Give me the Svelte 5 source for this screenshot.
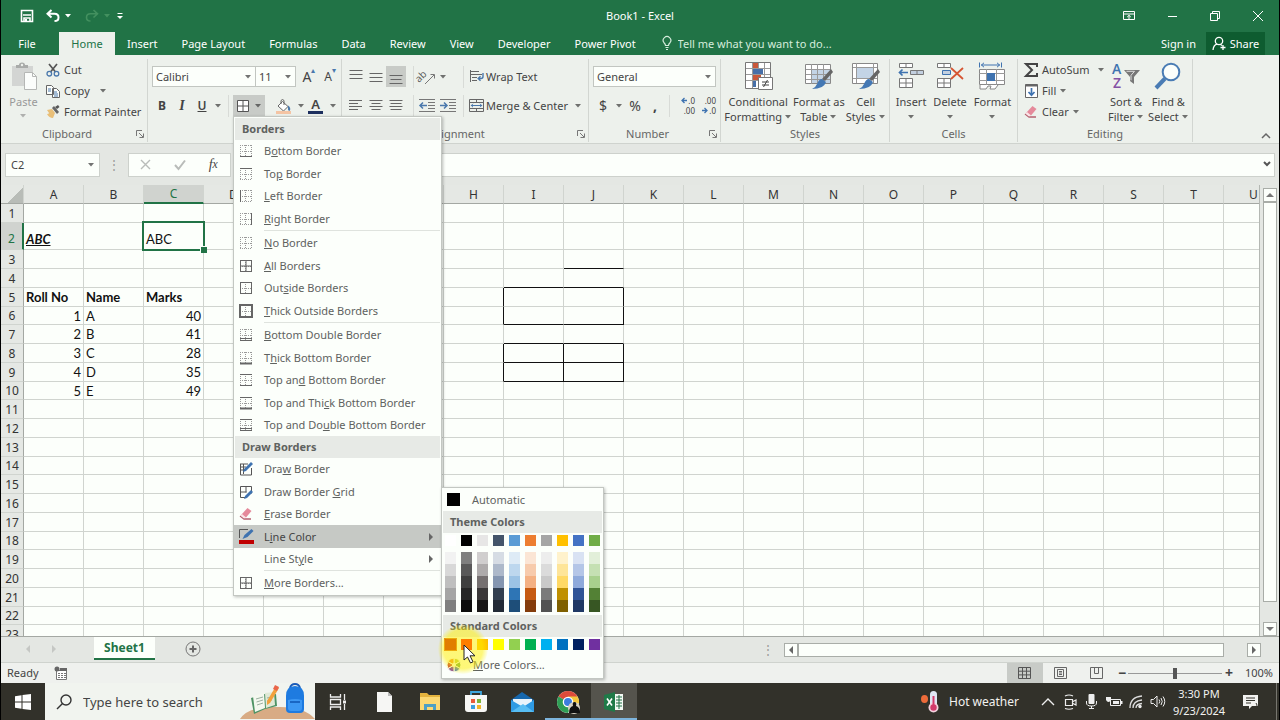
<script lang="ts">
  type Cell = { text: string; num?: boolean; bold?: boolean; fancy?: boolean };

  const tabs = ['File', 'Home', 'Insert', 'Page Layout', 'Formulas', 'Data', 'Review', 'View', 'Developer', 'Power Pivot'];
  const columns = 'ABCDEFGHIJKLMNOPQRSTU'.split('');
  const rows = Array.from({ length: 23 }, (_, i) => i + 1);

  const cells: Record<string, Cell> = {
    A2: { text: 'ABC', fancy: true },
    C2: { text: 'ABC' },
    A5: { text: 'Roll No', bold: true },
    B5: { text: 'Name', bold: true },
    C5: { text: 'Marks', bold: true },
  };
  const marks = [40, 41, 28, 35, 49];
  marks.forEach((mark, i) => {
    cells[`A${i + 6}`] = { text: String(i + 1), num: true };
    cells[`B${i + 6}`] = { text: 'ABCDE'[i] };
    cells[`C${i + 6}`] = { text: String(mark), num: true };
  });

  // drawn borders, stored on the cell above / to the left of the line
  const bottomEdges = new Set('J3 I4 J4 I6 J6 I7 J7 I8 J8 I9 J9'.split(' '));
  const rightEdges = new Set('H5 H6 J5 J6 H8 H9 I8 I9 J8 J9'.split(' '));

  let selected = $state('C2');

  // "&" marks the access key
  const borderGroups = [
    [['B&ottom Border', 'b'], ['To&p Border', 't'], ['&Left Border', 'l'], ['&Right Border', 'r']],
    [['&No Border', ''], ['&All Borders', 'tblrx'], ['Out&side Borders', 'tblr'], ['&Thick Outside Borders', 'K']],
    [
      ['&Bottom Double Border', 'D'],
      ['T&hick Bottom Border', 'B'],
      ['Top an&d Bottom Border', 'tb'],
      ['Top and Thi&ck Bottom Border', 'tB'],
      ['Top and Do&uble Bottom Border', 'tD'],
    ],
  ];
  const drawItems = [
    ['Dra&w Border', 'drawBorder'],
    ['Draw Border &Grid', 'drawGrid'],
    ['&Erase Border', 'eraser'],
    ['L&ine Color', 'lineColor'],
    ['Line St&yle', ''],
  ];

  const themeColors = ['#ffffff', '#000000', '#e7e6e6', '#44546a', '#5b9bd5', '#ed7d31', '#a5a5a5', '#ffc000', '#4472c4', '#70ad47'];
  const tints = [
    ['#f2f2f2', '#7f7f7f', '#d0cece', '#d6dce4', '#deebf6', '#fbe5d5', '#ededed', '#fff2cc', '#d9e2f3', '#e2efd9'],
    ['#d8d8d8', '#595959', '#aeabab', '#adb9ca', '#bdd7ee', '#f7cbac', '#dbdbdb', '#fee599', '#b4c6e7', '#c5e0b3'],
    ['#bfbfbf', '#3f3f3f', '#757070', '#8496b0', '#9cc3e5', '#f4b183', '#c9c9c9', '#ffd965', '#8eaadb', '#a8d08d'],
    ['#a5a5a5', '#262626', '#3a3838', '#323f4f', '#2e75b5', '#c55a11', '#7b7b7b', '#bf9000', '#2f5496', '#538135'],
    ['#7f7f7f', '#0c0c0c', '#171616', '#222a35', '#1e4e79', '#833c0b', '#525252', '#7f6000', '#1f3864', '#375623'],
  ];
  const standardColors = ['#c00000', '#ff0000', '#ffc000', '#ffff00', '#92d050', '#00b050', '#00b0f0', '#0070c0', '#002060', '#7030a0'];

  const icons: Record<string, string> = {
    save: '<path d="M1.500 1.500h11v11h-11z" fill="none" stroke="#fff" stroke-width="1.600"/><path d="M3 6h8M4 12V9h6v3" fill="none" stroke="#fff" stroke-width="1.600"/><path d="M5 10h2v3H5z" fill="#fff"/>',
    undo: '<path d="M5.500 1 1.500 4.800l4 3.700M2 4.800h6.500q4 0 4 3.600t-4 3.600" fill="none" stroke="#fff" stroke-width="2"/>',
    redo: '<path d="M8.500 1l4 3.800-4 3.700M12 4.800H5.500q-4 0-4 3.600t4 3.600" fill="none" stroke="#43905f" stroke-width="1.600"/>',
    customize: '<path d="M3.500 3.500h5" stroke="#fff"/><path d="M3 6h6L6 9z" fill="#fff"/>',
    ribbonOpts: '<path d="M1.500 2.500h11v8h-11zM1.500 5h11M7 10V6.500M5.200 8 7 6.300 8.800 8" fill="none" stroke="#fff"/>',
    minimize: '<path d="M3 7.500h9" stroke="#fff"/>',
    restore: '<path d="M2.500 4.500h7v7h-7zM4.500 4V2.500h7v7H10" fill="none" stroke="#fff"/>',
    close: '<path d="M2 2l10 10M12 2 2 12" stroke="#fff" fill="none"/>',
    bulb: '<path d="M4.500 9.500Q4.500 8 3 6.700a3.800 3.800 0 1 1 6 0Q7.500 8 7.500 9.500zM4.500 11.500h3M5 13.500h2" fill="none" stroke="#d5ecdc" stroke-width="1.200"/>',
    person: '<circle cx="7" cy="5" r="3.700" fill="none" stroke="#fff" stroke-width="1.300"/><path d="M1 14q.5-5 4-5.800M8.500 8.500l1.500 1M11 9v5M8.500 11.500h5" fill="none" stroke="#fff" stroke-width="1.300"/>',
    paste: '<path d="M2 4h21v20H2z" fill="#d3d5d3"/><path d="M6 3h3q0-2.500 3-2.500T15 3h3v3H6z" fill="#a9aba9"/><circle cx="12" cy="3" r="1.200" fill="#eef1ed"/><path d="M14.500 10.500h8l4 4v13h-12z" fill="#fbfdfb" stroke="#b5b7b5"/><path d="M22.500 10.500v4h4" fill="none" stroke="#b5b7b5"/>',
    cut: '<path d="M3 1l6.500 8M11 1 4.500 9" stroke="#555" stroke-width="1.700"/><circle cx="3.300" cy="10.700" r="2.300" fill="none" stroke="#4a78ac" stroke-width="1.300"/><circle cx="10.500" cy="10.700" r="2.300" fill="none" stroke="#4a78ac" stroke-width="1.300"/>',
    copy: '<path d="M.5 1.500h5l2 2v7h-7zM6.500 4.500h4l3 3v6h-7z" fill="#fcfefb" stroke="#666"/><path d="M2 5h3M2 7h3M8 8h3M8 10h4M8 12h4" stroke="#4a78ac"/>',
    painter: '<path d="M1 5l5-1 3 4-2 5q-4 0-6-4 2 0 2-1z" fill="#e9bf78"/><path d="M6 3l2-2 5 6-2 2z" fill="#666"/><path d="M9 2l3-2 1.500 2L11 4z" fill="#555"/>',
    launcher: '<path d="M.5 6V.5H6M3 3l4 4M7.500 3.500v4h-4" fill="none" stroke="#777"/>',
    borders: '<path d="M1.500 1.500h11v11h-11zM7 1.500v11M1.500 7h11" fill="#fff" stroke="#555"/>',
    bucket: '<path d="M6.500 3.500l5.500 5-4.500 4.500L2 8z" fill="#fff" stroke="#666"/><path d="M5 6V2.500q1.500-2 3 0V7" fill="none" stroke="#666"/><path d="M12 7.500q3 2 2 5-1.500 1-2-1z" fill="#4a78ac"/><path d="M0 13h15v3H0z" fill="#f4c4a4"/>',
    wrap: '<path d="M1.500 1v12M1 2.500h9M1 5.500h12M3 8.500h5M3 11.500h5" stroke="#666" fill="none"/><path d="M14 4v3.500q0 2-2 2H9.500M11.500 7.300 9.200 9.500l2.300 2.200" stroke="#4a78ac" fill="none" stroke-width="1.400"/>',
    merge: '<path d="M.5 1.500h14v12H.5zM.5 4.500h14M.5 10.500h14M7.500 1.500v3M7.500 10.500v3" stroke="#666" fill="none"/><path d="M2 7.500h11M4 5.800 2.300 7.500 4 9.200M11 5.800l1.700 1.700L11 9.200" stroke="#4a78ac" fill="none"/>',
    orient: '<text x="-2" y="9" font-family="Open Sans" font-size="10" fill="#555" transform="rotate(-45 5 9)">ab</text><path d="M6 15 15 6M11.500 5.500H15.500V9.500" stroke="#777" fill="none"/>',
    outdent: '<path d="M0 1.500h16M9 4.500h7M9 7.500h7M9 10.500h7M0 13.500h16" stroke="#777"/><path d="M1 7.500h7M4 4.500l-3 3 3 3" stroke="#4a78ac" fill="none" stroke-width="1.500"/>',
    indent: '<path d="M0 1.500h16M9 4.500h7M9 7.500h7M9 10.500h7M0 13.500h16" stroke="#777"/><path d="M0 7.500h7M4 4.500l3 3-3 3" stroke="#4a78ac" fill="none" stroke-width="1.500"/>',
    condFmt: '<path d="M1.500.5h25v26h-25z" fill="#fff" stroke="#777"/><path d="M8.500 1v25M14.500 1v25M20.500 1v25M2 6.500h24M2 12.500h24M2 18.500h24" stroke="#999"/><path d="M9 1h5v5H9zM9 13h8v5H9z" fill="#c9573a"/><path d="M9 7h10v5H9zM9 19h3v6H9z" fill="#476fa8"/><path d="M14.500 15.500h14v12h-14z" fill="#fff" stroke="#777"/><path d="M18 20h7M18 23h7M23.500 18l-4 7" stroke="#444" fill="none"/>',
    fmtTable: '<path d="M.5 2.500h25v19H.5z" fill="#fff" stroke="#888"/><path d="M7 8h18v13H7z" fill="#c3d4e6"/><path d="M6.500 2v20M12.500 2v20M18.500 2v20M1 7.500h24M1 12.500h24M1 17.500h24" stroke="#999"/><path d="M26 7l2 3-8 9-3-2z" fill="#666"/><path d="M17 17l4 3q-2 7-14 7 4-2 5-5 2-5 5-5z" fill="#4478b4"/>',
    cellStyles: '<path d="M.5 1.500h25v20H.5z" fill="#fff" stroke="#888"/><path d="M5 6h16v11H5z" fill="#c3d4e6"/><path d="M4.500 1v20M21.500 1v20M1 5.500h24M1 16.500h24" stroke="#999" fill="none"/><path d="M26 7l2 3-8 9-3-2z" fill="#666"/><path d="M17 17l4 3q-2 7-14 7 4-2 5-5 2-5 5-5z" fill="#4478b4"/>',
    insert: '<path d="M2.500 1.500h13v4h-13zM9 1.500v4M2.500 16.500h13v9h-13zM9 16.500v9M2.500 21h13" fill="#fff" stroke="#777"/><path d="M13.500 8.500h13v4h-13zM20 8.500v4" fill="#c3d0e0" stroke="#777"/><path d="M2 10.500h9M5.500 7.500l-3 3 3 3" fill="none" stroke="#3f73b0" stroke-width="1.700"/>',
    delete: '<path d="M1.500 1.500h13v4h-13zM8 1.500v4M1.500 16.500h13v9h-13zM8 16.500v9M1.500 21h13" fill="#fff" stroke="#777"/><path d="M6.500 8.500h8v4h-8z" fill="#c3d0e0" stroke="#3f73b0"/><path d="M15 6l12 11M27 6 15 17" stroke="#d65532" stroke-width="1.800" fill="none"/>',
    format: '<path d="M1.500.5v5M23.500.5v5M3 3h19M6 .8 3.500 3 6 5.200M19 .8 21.500 3 19 5.200" stroke="#3f73b0" fill="none"/><path d="M1.500 7.500h25v15h-25z" fill="#fff" stroke="#888"/><path d="M8.500 7v16M18.500 7v16M1 11.500h26M1 18.500h26" stroke="#999"/><path d="M9 11h8v8H9z" fill="#3f73b0"/><path d="M2 23v4h6l2-3h3l-1 3h5l3-4" fill="#fff" stroke="#888"/>',
    sigma: '<path d="M13 4V1H2l6 6-6 6h11v-3" fill="none" stroke="#444" stroke-width="2"/>',
    fill: '<path d="M1.500.5h12v13h-12z" fill="#fff" stroke="#666"/><path d="M1.500 1.500h12" stroke="#666" stroke-width="2"/><path d="M7.500 4v7M4.500 8l3 3.200 3-3.200" stroke="#3f73b0" stroke-width="1.700" fill="none"/>',
    eraser: '<path d="M2 8l6.500-7 4 3L7 10.500z" fill="#e58a9b"/><path d="M1 9l4 3h7" fill="none" stroke="#b5606f" stroke-width="1.300"/><path d="M1.500 8.500 5 11.500l1.500-1.500L3 7z" fill="#fbe3e6"/>',
    sort: '<path d="M12 8h16l-6 7v7l-4-3v-4z" fill="#777"/><path d="M14.500 9.300h8l-3.500 4v5" fill="none" stroke="#ddd"/><text x="0" y="12" font-family="Open Sans" font-size="14" font-weight="600" fill="#3f73b0">A</text><text x="1" y="26" font-family="Open Sans" font-size="14" font-weight="600" fill="#8551a5">Z</text>',
    find: '<circle cx="17" cy="10" r="8.300" fill="#fbfefb" stroke="#4a7cb4" stroke-width="2"/><path d="M11 16.500 2 26" stroke="#4a7cb4" stroke-width="4"/>',
    chevUp: '<path d="M2 6l4-4 4 4" fill="none" stroke="#666" stroke-width="1.500"/>',
    chevDown: '<path d="M3 3l3 3 3-3" fill="none" stroke="#555" stroke-width="2"/>',
    cancel: '<path d="M1 1l9 9M10 1 1 10" stroke="#b9bcb9" stroke-width="1.400"/>',
    check: '<path d="M1 6l3.500 4L11 1.500" stroke="#b9bcb9" stroke-width="2" fill="none"/>',
    drawBorder: '<path d="M1 2h8M1 5h6M1 8h3M1.500 2v11h11V6M4.500 2v10" stroke="#555" fill="none"/><path d="M12 0l2 2-7 7-3 1 1-3z" fill="#3f73b0"/>',
    drawGrid: '<path d="M1.500 1.500h11v7M1.500 1.500v11h5M7 1.500v6M1.500 7h6" stroke="#555" fill="none"/><path d="M12 5l2 2-6 6-3 1 1-3z" fill="#3f73b0"/>',
    lineColor: '<path d="M9 .5H.5V9" stroke="#555" fill="none"/><path d="M12.500 0l2 2-6 6-5 2 2-4z" fill="#3f73b0"/><path d="M0 11h15v4H0z" fill="#c00000"/>',
    wheel: '<g stroke="#fcfffb" stroke-width="1"><path d="M7 7V0a7 7 0 0 1 6 3.500z" fill="#b8c94a"/><path d="M7 7l6-3.500a7 7 0 0 1 0 7z" fill="#6aa84f"/><path d="M7 7l6 3.500A7 7 0 0 1 7 14z" fill="#4a78c0"/><path d="M7 7v7a7 7 0 0 1-6-3.500z" fill="#8a4b9c"/><path d="M7 7l-6 3.500a7 7 0 0 1 0-7z" fill="#c8453a"/><path d="M7 7 1 3.500A7 7 0 0 1 7 0z" fill="#ee8a30"/></g><circle cx="7" cy="7" r="2" fill="#fcfffb"/>',
    addSheet: '<circle cx="8" cy="8" r="7" fill="none" stroke="#777"/><path d="M8 4.500v7M4.500 8h7" stroke="#666" stroke-width="2"/>',
    macro: '<path d="M2.500 4.500h10v9h-10z" fill="#fff" stroke="#777"/><path d="M6 2h7v3H6z" fill="#666"/><circle cx="3" cy="3" r="2.500" fill="#666"/><path d="M4 7.500h8M4 9.500h8M4 11.500h8" stroke="#777" stroke-dasharray="2 1"/>',
    viewNormal: '<path d="M.5 1.500h12v11H.5zM.5 5.200h12M.5 8.900h12M4.500 1.500v11M8.500 1.500v11" fill="none" stroke="#555"/>',
    viewPage: '<path d="M.5 1.500h12v11H.5zM3.500 3.500h6v7h-6zM5 5.500h3M5 7h3M5 8.500h3" fill="none" stroke="#666"/>',
    viewBreak: '<path d="M.5 1.500h12v11H.5zM4.500 1.500v6M8.500 1.500v6M4.500 7.500h4" fill="none" stroke="#666"/>',
    windows: '<path d="M0 2.200 6.500 1.300v6.200H0zM7.500 1.100 16 0v7.500H7.500zM0 8.500h6.500v6.200L0 13.800zM7.500 8.500H16V16l-8.500-1.100z" fill="#fff"/>',
    search: '<circle cx="10" cy="6" r="5" fill="none" stroke="#333" stroke-width="1.400"/><path d="M6.500 9.500 1 15" stroke="#333" stroke-width="1.500"/>',
    books: '<path d="M0 35q8-13 36-12 28-1 39 12z" fill="#d8ab84"/><path d="M11 14l13-4 6 1 6-1 1 12-12 3-11 5z" fill="#4e9364"/><path d="M13 12l11-3 1 15-10 4z" fill="#f4f8ef"/><path d="M25 9l9-1 1 13-9 3z" fill="#dfe9d6"/><path d="M16 15l7-2M16.500 18l6.500-2M17 21l6-2M27 14l5-1M27 17l5-1" stroke="#9bb0a0"/><path d="M36 2l3 2-9 15-3 2v-4z" fill="#f2a13c"/><path d="M35 1l4 2-2 4-4-2z" fill="#e9654a"/><path d="M50 4q1-4 5-4t5 4" fill="none" stroke="#1b5bb8" stroke-width="2"/><path d="M46 12q0-10 9-10t9 10v13q0 4-4 4H50q-4 0-4-4z" fill="#1e7be0"/><path d="M48 16q7-2 14 0v8q0 3-3 3h-8q-3 0-3-3z" fill="#3c98f4"/><path d="M50 18h10" stroke="#0e56b4" stroke-width="1.500"/>',
    taskView: '<path d="M1.500 0v3h10V0M1.500 5.500h10v5h-10zM1.500 16v-3h10v3M15.500 0v6M15.500 10v6" fill="none" stroke="#eee" stroke-width="1.300"/><path d="M14 6.500h3v3h-3z" fill="#eee"/>',
    file: '<path d="M0 0h11l4 4v16H0z" fill="#f6f6f4"/><path d="M11 0v4h4z" fill="#bbb"/>',
    folder: '<path d="M0 1h7l2 2h11v15H0z" fill="#e4b33e"/><path d="M0 5h20v13H0z" fill="#fbd873"/><path d="M4 18v-6h12v6h-3v-3H7v3z" fill="#4d9fc4"/>',
    store: '<path d="M6 5V1h10v4" fill="none" stroke="#3ea6dd" stroke-width="1.800"/><path d="M0 4h22v14q0 3-3 3H3q-3 0-3-3z" fill="#f7f7f5"/><path d="M6 8h4v4H6z" fill="#e8593a"/><path d="M12 8h4v4h-4z" fill="#7db53c"/><path d="M6 14h4v4H6z" fill="#3a9ee0"/><path d="M12 14h4v4h-4z" fill="#f0b429"/>',
    mail: '<path d="M0 8 11 0l12 8v12H0z" fill="#1667ad"/><path d="M2 7h19v6l-9 5-10-5z" fill="#e8f3fb"/><path d="M0 8l12 7L23 8v12H0z" fill="#2f9be4"/><path d="M0 20 12 12l11 8z" fill="#57bdf3"/>',
    chrome: '<circle cx="11" cy="11" r="11" fill="#e6e6e0"/><path d="M11 11 1.500 5.500A11 11 0 0 1 20.500 5.500z" fill="#dd4b3a"/><path d="M11 11 1.500 5.500A11 11 0 0 0 11 22l3-7z" fill="#2f9e55"/><path d="M11 5.500h9.500A11 11 0 0 1 22 12l-8 5z" fill="#f3c63c"/><circle cx="11" cy="11" r="5.300" fill="#fff"/><circle cx="11" cy="11" r="4" fill="#3d7de0"/><circle cx="17" cy="17" r="6" fill="#d7d2c4"/><path d="M12 22q0-6 4-7-1-4 1.500-4t1.500 4q4 1 4 7z" fill="#111"/>',
    excel: '<path d="M10 2h9v16h-9z" fill="#f4faf5"/><path d="M12 5h6M12 8h6M12 11h6M12 14h6M15 3v14" stroke="#217346"/><path d="M0 3l11-3v20L0 17z" fill="#1f7a48"/><path d="M3 6.500l5 7M8 6.500l-5 7" stroke="#fff" stroke-width="1.600"/>',
    thermo: '<ellipse cx="3.500" cy="8" rx="3.500" ry="4" fill="#ee6b3a"/><rect x="9" y="0" width="7" height="16" rx="3.500" fill="#dfe6f4"/><circle cx="12.500" cy="16.500" r="5" fill="#f3d3df"/><circle cx="12.500" cy="16.500" r="3.200" fill="#d23a6b"/><path d="M12.500 5v11" stroke="#d23a6b" stroke-width="2"/>',
    trayUp: '<path d="M1 10l6-6 6 6" fill="none" stroke="#eee" stroke-width="1.400"/>',
    meet: '<path d="M2.500 5.500h7v6h-7zM10 7.500l3-1.500v5L10 9.500M2 2q4-2 8 0M2 14.500q4 1.500 8 0" fill="none" stroke="#eee" stroke-width="1.200"/>',
    mic: '<rect x="3.500" y="0" width="6" height="10" rx="1" fill="#eee"/><path d="M1.500 7v2q0 3 5 3t5-3V7M6.500 12v2M4 14.500h5" fill="none" stroke="#eee"/>',
    battery: '<path d="M4.500 4.500h10v6h-10z" fill="none" stroke="#eee"/><path d="M7 6h6v3H7zM15 6h1.500v3H15zM0 2h5v3q-1 2-2.500 2T0 5z" fill="#eee"/>',
    wifi: '<path d="M1 14Q1 3 13 2M4 14q0-7 9-8M7 14q0-4 6-4.500" fill="none" stroke="#ddd" stroke-width="1.300"/><circle cx="11" cy="12.500" r="1.700" fill="#eee"/>',
    sound: '<path d="M1 5.500h2.500L7 2v11L3.500 9.500H1z" fill="none" stroke="#eee"/><path d="M9 5.500q1.500 2 0 4M11 4q2.500 3.500 0 7M13 2.500q3.500 5 0 10" fill="none" stroke="#eee"/>',
    notes: '<path d="M0 1h15v11H9l-3 3v-3H0z" fill="#f2f2f0"/><path d="M3 4h9M3 6.500h9M3 9h5" stroke="#34332c"/><path d="M10 14q4 1 4-3l-1-2" fill="none" stroke="#34332c"/>',
    pointer: '<path d="M1 1v15l3.500-3 3 6 2.500-1.200-3-6H12z" fill="#fff" stroke="#222"/>',
    arrowLeft: '<path d="M1 3.500h5M3.500 1 1 3.500 3.500 6" fill="none" stroke="#3f73b0" stroke-width="1.300"/>',
    arrowRight: '<path d="M0 3.500h5M2.500 1 5 3.500 2.500 6" fill="none" stroke="#3f73b0" stroke-width="1.300"/>',
  };

  function parts(label: string) {
    const i = label.indexOf('&');
    return [label.slice(0, i), label[i + 1], label.slice(i + 2)];
  }
</script>

{#snippet icon(name: string, w = 14, h = 14)}
  <svg class="icon" width={w} height={h} viewBox="0 0 {w} {h}" aria-hidden="true">{@html icons[name]}</svg>
{/snippet}

{#snippet caret()}
  <svg class="icon caret" width="7" height="4" viewBox="0 0 7 4" aria-hidden="true"><path d="M0 0h6L3 3.500z" fill="currentColor" /></svg>
{/snippet}

{#snippet lines(ys: number[], widths: number[])}
  <svg class="icon" width="14" height="16" viewBox="0 0 14 16" aria-hidden="true">
    {#each ys as y, i}
      <path d="M{widths[i] < 0 ? 0 : (14 - widths[i]) / 2} {y}.5h{Math.abs(widths[i])}" stroke="#666" />
    {/each}
  </svg>
{/snippet}

{#snippet borderIcon(edges: string)}
  <svg class="icon" width="14" height="14" viewBox="0 0 14 14" fill="none" stroke="#666" aria-hidden="true">
    <path d="M1 1.500h12M1 7.500h12M1 12.500h12M1.500 1v12M6.500 1v12M12.500 1v12" stroke="#999" stroke-dasharray="1 1" />
    {#if edges.includes('t')}<path d="M1 1.500h12" />{/if}
    {#if edges.includes('b')}<path d="M1 12.500h12" />{/if}
    {#if edges.includes('l')}<path d="M1.500 1v12" />{/if}
    {#if edges.includes('r')}<path d="M12.500 1v12" />{/if}
    {#if edges.includes('x')}<path d="M1 7h12M7 1v12" />{/if}
    {#if edges.includes('B')}<path d="M1 12.500h12" stroke-width="2" />{/if}
    {#if edges.includes('D')}<path d="M1 10.500h12M1 12.500h12" />{/if}
    {#if edges.includes('K')}<path d="M1 1h12v12H1z" stroke-width="2" />{/if}
  </svg>
{/snippet}

{#snippet keyed(label: string)}
  {@const p = parts(label)}
  <span>{p[0]}<u>{p[1]}</u>{p[2]}</span>
{/snippet}

<div class="app">
  <header class="title-bar">
    <div class="quick">
      <button aria-label="Save">{@render icon('save')}</button>
      <button aria-label="Undo">{@render icon('undo')}{@render caret()}</button>
      <button class="redo" aria-label="Redo">{@render icon('redo')}{@render caret()}</button>
      <button aria-label="Customize Quick Access Toolbar">{@render icon('customize', 12, 12)}</button>
    </div>
    <h1>Book1 - Excel</h1>
    <div class="window-buttons">
      <button aria-label="Ribbon Display Options">{@render icon('ribbonOpts')}</button>
      <button aria-label="Minimize">{@render icon('minimize')}</button>
      <button aria-label="Restore Down">{@render icon('restore')}</button>
      <button aria-label="Close">{@render icon('close')}</button>
    </div>
  </header>

  <nav class="tabs">
    {#each tabs as tab}
      <button class="tab" class:file={tab === 'File'} class:active={tab === 'Home'}>{tab}</button>
    {/each}
    <label class="tell">
      {@render icon('bulb', 12, 15)}
      <input type="text" placeholder="Tell me what you want to do..." aria-label="Tell me" />
    </label>
    <button class="sign-in">Sign in</button>
    <button class="share">{@render icon('person', 14, 15)}Share</button>
  </nav>

  <div class="ribbon">
    <section class="group">
      <div class="tools clipboard">
        <button class="big paste">{@render icon('paste', 28, 29)}<span>Paste</span>{@render caret()}</button>
        <div class="stack">
          <button>{@render icon('cut')}Cut</button>
          <button>{@render icon('copy')}Copy <i class="gap"></i>{@render caret()}</button>
          <button>{@render icon('painter')}Format Painter</button>
        </div>
      </div>
      <footer><span>Clipboard</span><button aria-label="Clipboard settings">{@render icon('launcher', 8, 8)}</button></footer>
    </section>

    <section class="group">
      <div class="tools two-rows">
        <div class="line">
          <div class="combo font-name"><select aria-label="Font"><option>Calibri</option></select>{@render caret()}</div>
          <div class="combo font-size"><select aria-label="Font Size"><option>11</option></select>{@render caret()}</div>
          <button class="glyph grow" aria-label="Increase Font Size">A<sup>▴</sup></button>
          <button class="glyph" aria-label="Decrease Font Size">A<sup>▾</sup></button>
        </div>
        <div class="line">
          <button class="glyph"><b>B</b></button>
          <button class="glyph"><i>I</i></button>
          <button class="glyph"><u>U</u></button>
          <button class="mini" aria-label="Underline styles">{@render caret()}</button>
          <i class="rule"></i>
          <div class="menu-anchor">
            <button class="borders-btn" aria-label="Borders">{@render icon('borders')}{@render caret()}</button>

            <div class="menu">
              <h2>Borders</h2>
              {#each borderGroups as group, g}
                {#if g > 0}<hr />{/if}
                <div class="items">
                  {#each group as [label, edges]}
                    <button>{@render borderIcon(edges)}{@render keyed(label)}</button>
                  {/each}
                </div>
              {/each}
              <h2>Draw Borders</h2>
              <div class="items">
                {#each drawItems as [label, art]}
                  {#if art === 'lineColor'}
                    <div class="menu-anchor">
                      <button class="hot">{@render icon(art, 15, 15)}{@render keyed(label)}<i class="arrow"></i></button>
                      <div class="palette">
                        <button class="auto"><i class="chip"></i>Automatic</button>
                        <h2>Theme Colors</h2>
                        <div class="swatches">
                          {#each themeColors as color}
                            <button class="swatch" style="background:{color}" aria-label={color}></button>
                          {/each}
                        </div>
                        <div class="swatches tints">
                          {#each tints.flat() as color}
                            <button class="swatch" style="background:{color}" aria-label={color}></button>
                          {/each}
                        </div>
                        <h2>Standard Colors</h2>
                        <div class="swatches">
                          {#each standardColors as color}
                            <button class="swatch" class:picked={color === '#c00000'} style="background:{color}" aria-label={color}></button>
                          {/each}
                        </div>
                        <button class="more">{@render icon('wheel')}{@render keyed('&More Colors...')}</button>
                        <div class="halo"></div>
                        <div class="pointer">{@render icon('pointer', 14, 20)}</div>
                      </div>
                    </div>
                  {:else}
                    <button>
                      {#if art}{@render icon(art)}{:else}<i class="no-icon"></i>{/if}
                      {@render keyed(label)}
                      {#if !art}<i class="arrow"></i>{/if}
                    </button>
                  {/if}
                {/each}
              </div>
              <hr />
              <div class="items">
                <button>{@render borderIcon('tblrx')}{@render keyed('&More Borders...')}</button>
              </div>
            </div>
          </div>
          <button class="color-btn" aria-label="Fill Color">{@render icon('bucket', 15, 16)}{@render caret()}</button>
          <button class="color-btn" aria-label="Font Color"><span class="font-color">A</span>{@render caret()}</button>
        </div>
      </div>
      <footer><span>Font</span></footer>
    </section>

    <section class="group">
      <div class="tools two-rows align">
        <div class="line">
          <button class="glyph" aria-label="Top Align">{@render lines([1, 5, 9], [13, 13, 13])}</button>
          <button class="glyph" aria-label="Middle Align">{@render lines([4, 8, 12], [13, 13, 13])}</button>
          <button class="glyph on" aria-label="Bottom Align">{@render lines([6, 10, 14], [13, 11, 13])}</button>
          <i class="rule"></i>
          <button class="wide" aria-label="Orientation">{@render icon('orient', 16, 16)}{@render caret()}</button>
          <i class="rule"></i>
          <button class="text-btn">{@render icon('wrap', 15, 15)}Wrap Text</button>
        </div>
        <div class="line">
          <button class="glyph" aria-label="Align Left">{@render lines([2, 5, 8, 11], [-13, -9, -13, -9])}</button>
          <button class="glyph" aria-label="Center">{@render lines([2, 5, 8, 11], [13, 9, 13, 9])}</button>
          <button class="glyph" aria-label="Align Right">{@render lines([2, 5, 8, 11], [13, 11, 13, 11])}</button>
          <i class="rule"></i>
          <div class="wide">
            <button aria-label="Decrease Indent">{@render icon('outdent', 16, 16)}</button>
            <button aria-label="Increase Indent">{@render icon('indent', 16, 16)}</button>
          </div>
          <i class="rule"></i>
          <button class="text-btn">{@render icon('merge', 15, 15)}Merge &amp; Center</button>
          <button class="mini" aria-label="Merge options">{@render caret()}</button>
        </div>
      </div>
      <footer><span>Alignment</span><button aria-label="Alignment settings">{@render icon('launcher', 8, 8)}</button></footer>
    </section>

    <section class="group">
      <div class="tools two-rows">
        <div class="line">
          <div class="combo number-format"><select aria-label="Number Format"><option>General</option></select>{@render caret()}</div>
        </div>
        <div class="line">
          <button class="glyph sign">$</button>
          <button class="mini" aria-label="Accounting formats">{@render caret()}</button>
          <button class="glyph sign">%</button>
          <button class="glyph sign"><b>,</b></button>
          <i class="rule"></i>
          <button class="decimals" aria-label="Increase Decimal"><span>{@render icon('arrowLeft', 7, 7)}.0</span><span>.00</span></button>
          <button class="decimals" aria-label="Decrease Decimal"><span>.00</span><span>{@render icon('arrowRight', 7, 7)}.0</span></button>
        </div>
      </div>
      <footer><span>Number</span><button aria-label="Number settings">{@render icon('launcher', 8, 8)}</button></footer>
    </section>

    <section class="group">
      <div class="tools bigs styles">
        <button class="big">{@render icon('condFmt', 28, 29)}<span>Conditional</span><span>Formatting {@render caret()}</span></button>
        <button class="big">{@render icon('fmtTable', 28, 29)}<span>Format as</span><span>Table {@render caret()}</span></button>
        <button class="big">{@render icon('cellStyles', 28, 29)}<span>Cell</span><span>Styles {@render caret()}</span></button>
      </div>
      <footer><span>Styles</span></footer>
    </section>

    <section class="group">
      <div class="tools bigs">
        <button class="big">{@render icon('insert', 28, 29)}<span>Insert</span><span>{@render caret()}</span></button>
        <button class="big">{@render icon('delete', 28, 29)}<span>Delete</span><span>{@render caret()}</span></button>
        <button class="big">{@render icon('format', 28, 29)}<span>Format</span><span>{@render caret()}</span></button>
      </div>
      <footer><span>Cells</span></footer>
    </section>

    <section class="group">
      <div class="tools editing">
        <div class="stack">
          <button>{@render icon('sigma')}AutoSum <i class="gap"></i>{@render caret()}</button>
          <button>{@render icon('fill')}Fill {@render caret()}</button>
          <button>{@render icon('eraser')}Clear {@render caret()}</button>
        </div>
        <button class="big">{@render icon('sort', 28, 29)}<span>Sort &amp;</span><span>Filter {@render caret()}</span></button>
        <button class="big">{@render icon('find', 28, 29)}<span>Find &amp;</span><span>Select {@render caret()}</span></button>
      </div>
      <footer><span>Editing</span></footer>
    </section>

    <button class="collapse" aria-label="Collapse the Ribbon">{@render icon('chevUp', 12, 12)}</button>
  </div>

  <div class="formula-bar">
    <div class="name-box">
      <input type="text" aria-label="Name Box" value={selected} />
      {@render caret()}
    </div>
    <span class="grip">⋮</span>
    <div class="formula-buttons">
      <button aria-label="Cancel">{@render icon('cancel', 12, 12)}</button>
      <button aria-label="Enter">{@render icon('check', 12, 12)}</button>
      <button class="fx" aria-label="Insert Function">f<small>x</small></button>
    </div>
    <div class="formula">
      <input type="text" aria-label="Formula" />
      <button aria-label="Expand Formula Bar">{@render icon('chevDown', 12, 12)}</button>
    </div>
  </div>

  <main class="sheet">
    <div class="grid">
      <table>
        <colgroup>
          <col class="head-col" />
          {#each columns as col (col)}<col />{/each}
        </colgroup>
        <thead>
          <tr>
            <th class="corner" aria-label="Select All"></th>
            {#each columns as col (col)}
              <th scope="col" class:current={col === selected[0]}>{col}</th>
            {/each}
          </tr>
        </thead>
        <tbody>
          {#each rows as row (row)}
            <tr class:tall={row === 2} class:short={row % 4 === 2}>
              <th scope="row" class:current={String(row) === selected.slice(1)}>{row}</th>
              {#each columns as col (col)}
                {@const id = col + row}
                {@const cell = cells[id]}
                <td
                  class:num={cell?.num}
                  class:bold={cell?.bold}
                  class:fancy={cell?.fancy}
                  class:edge-b={bottomEdges.has(id)}
                  class:edge-r={rightEdges.has(id)}
                  class:selected={id === selected}
                  onclick={() => (selected = id)}>{cell?.text ?? ''}</td>
              {/each}
            </tr>
          {/each}
        </tbody>
      </table>
    </div>
    <div class="v-scroll">
      <button aria-label="Scroll up"><i class="tri up"></i></button>
      <div class="v-thumb"></div>
      <button aria-label="Scroll down"><i class="tri down"></i></button>
    </div>
  </main>

  <div class="sheet-tabs">
    <button class="nav-arrow" aria-label="Previous sheet"><i class="tri left"></i></button>
    <button class="nav-arrow" aria-label="Next sheet"><i class="tri right"></i></button>
    <button class="sheet-tab">Sheet1</button>
    <button class="add" aria-label="New sheet">{@render icon('addSheet', 16, 16)}</button>
    <div class="h-scroll">
      <span class="grip">⋮</span>
      <button aria-label="Scroll left"><i class="tri left"></i></button>
      <div class="h-thumb"></div>
      <button aria-label="Scroll right"><i class="tri right"></i></button>
    </div>
  </div>

  <div class="status">
    <span>Ready</span>
    <button class="macro" aria-label="Record Macro">{@render icon('macro')}</button>
    <div class="views">
      <button class="on" aria-label="Normal">{@render icon('viewNormal')}</button>
      <button aria-label="Page Layout">{@render icon('viewPage')}</button>
      <button aria-label="Page Break Preview">{@render icon('viewBreak')}</button>
    </div>
    <button class="zoom-btn" aria-label="Zoom Out">−</button>
    <input type="range" min="0" max="200" value="100" aria-label="Zoom" />
    <button class="zoom-btn" aria-label="Zoom In">+</button>
    <button class="percent">100%</button>
  </div>

  <div class="taskbar">
    <button class="start" aria-label="Start">{@render icon('windows', 16, 16)}</button>
    <label class="search">
      {@render icon('search', 16, 16)}
      <input type="text" placeholder="Type here to search" aria-label="Search" />
      {@render icon('books', 75, 35)}
    </label>
    <button aria-label="Task View">{@render icon('taskView', 18, 16)}</button>
    <button aria-label="Notepad">{@render icon('file', 15, 20)}</button>
    <button aria-label="File Explorer">{@render icon('folder', 20, 20)}</button>
    <button aria-label="Store">{@render icon('store', 22, 22)}</button>
    <button aria-label="Mail">{@render icon('mail', 23, 20)}</button>
    <button class="running" aria-label="Chrome">{@render icon('chrome', 23, 22)}</button>
    <button class="running front" aria-label="Excel">{@render icon('excel', 20, 20)}</button>
    <div class="tray">
      <button class="weather">{@render icon('thermo', 18, 22)}Hot weather</button>
      <button aria-label="Show hidden icons">{@render icon('trayUp')}</button>
      <button aria-label="Meet Now">{@render icon('meet', 14, 16)}</button>
      <button aria-label="Microphone">{@render icon('mic', 14, 16)}</button>
      <button aria-label="Battery">{@render icon('battery', 16, 14)}</button>
      <button aria-label="Network">{@render icon('wifi', 14, 16)}</button>
      <button aria-label="Volume">{@render icon('sound', 16, 16)}</button>
      <button class="clock"><span>3:30 PM</span><span>9/23/2024</span></button>
      <button class="notes" aria-label="Notifications">{@render icon('notes', 16, 16)}</button>
    </div>
  </div>
</div>

<style>
  :global(body) {
    margin: 0;
    overflow: hidden;
  }
  .app {
    --green: #217346;
    --chrome: #edf1ec;
    --band: #e4e7e3;
    --paper: #fcfffb;
    --line: #d0d4cf;
    display: flex;
    flex-direction: column;
    height: 100vh;
    box-sizing: border-box;
    border: solid #000;
    border-width: 0 1px;
    font-family: 'Noto Sans', 'Open Sans', sans-serif;
    font-size: 11px;
    line-height: 16px;
    color: #444;
    background: var(--band);
  }
  .app * {
    box-sizing: border-box;
  }
  button,
  input,
  select {
    margin: 0;
    padding: 0;
    border: 0;
    border-radius: 0;
    background: none;
    color: inherit;
    font: inherit;
    outline: none;
    appearance: none;
  }
  button {
    display: flex;
    align-items: center;
    justify-content: center;
    white-space: nowrap;
  }
  input {
    min-width: 0;
  }
  .icon {
    flex: none;
    display: block;
    overflow: visible;
  }
  .ribbon .caret,
  .name-box .caret {
    opacity: 0.75;
  }

  /* title bar and tabs */
  .title-bar {
    flex: none;
    display: grid;
    grid-template-columns: 1fr auto 1fr;
    align-items: center;
    height: 32px;
    color: #fff;
    background: var(--green);
  }
  .quick {
    display: flex;
    align-items: center;
    gap: 13px;
    height: 28px;
    padding-left: 19px;
  }
  .quick > :first-child {
    margin-right: -1px;
  }
  .quick > :last-child {
    margin-left: -10px;
  }
  .quick button {
    gap: 5px;
  }
  .redo {
    color: #43905f;
  }
  h1 {
    margin: 0;
    font-size: 11px;
    font-weight: 400;
  }
  .window-buttons {
    display: flex;
    justify-content: flex-end;
    height: 28px;
  }
  .window-buttons button {
    width: 43px;
  }
  .tabs {
    flex: none;
    display: flex;
    height: 23px;
    color: #fff;
    background: var(--green);
  }
  .tab {
    padding: 0 12px;
  }
  .tab.file {
    width: 58px;
    padding: 0 6px 0 0;
  }
  .tab.active {
    width: 56px;
    padding: 0;
    color: var(--green);
    background: var(--chrome);
  }
  .tell {
    flex: 1;
    display: flex;
    align-items: center;
    gap: 5px;
    padding-left: 13px;
  }
  .tell input {
    flex: 1;
  }
  .tell input::placeholder {
    color: #d5ecdc;
    opacity: 1;
  }
  .share {
    gap: 4px;
    width: 59px;
    margin: 0 14px 0 10px;
    background: #0e5c30;
  }

  /* ribbon */
  .ribbon {
    flex: none;
    display: grid;
    grid-template-columns: 147px 194px 247px 132px 169px 128px 175px 1fr;
    height: 89px;
    background: var(--chrome);
    border-bottom: 1px solid #cfd3ce;
  }
  .group {
    display: flex;
    flex-direction: column;
    min-width: 0;
    margin: 4px 0 6px;
    border-right: 1px solid #d2d6d1;
  }
  .tools {
    display: flex;
    height: 67px;
  }
  footer {
    display: flex;
    height: 16px;
    color: #666;
  }
  footer span {
    flex: 1;
    text-align: center;
  }
  footer button {
    width: 14px;
  }
  .stack {
    display: flex;
    flex-direction: column;
  }
  .stack button {
    justify-content: flex-start;
    gap: 4px;
    height: 21px;
  }
  .gap {
    width: 2px;
  }
  .clipboard {
    gap: 7px;
    padding-left: 7px;
  }
  .big {
    flex-direction: column;
    justify-content: flex-start;
    padding-top: 3px;
    line-height: 15px;
  }
  .big .icon + span {
    margin-top: 3px;
  }
  .big span {
    display: flex;
    align-items: center;
    gap: 3px;
    height: 15px;
  }
  .paste {
    width: 31px;
    gap: 0;
    color: #999;
  }
  .paste > span {
    margin-bottom: 5px;
  }
  .two-rows {
    flex-direction: column;
    gap: 8px;
    padding: 7px 0 0 4px;
  }
  .line {
    display: flex;
    align-items: center;
    height: 21px;
  }
  .combo {
    display: flex;
    align-items: center;
    height: 21px;
    padding-right: 3px;
    background: var(--paper);
    border: 1px solid #c2c6c1;
  }
  .combo select {
    flex: 1;
    min-width: 0;
    padding-left: 3px;
  }
  .font-name {
    width: 104px;
  }
  .font-size {
    width: 40px;
    margin-right: 2px;
    border-left: 0;
  }
  .number-format {
    width: 123px;
  }
  .glyph {
    width: 20px;
    height: 21px;
    font-size: 12px;
  }
  .glyph i {
    font-family: 'Liberation Serif', serif;
    font-size: 14px;
    font-weight: 700;
  }
  .glyph u {
    font-weight: 600;
  }
  .glyph sup {
    align-self: flex-start;
    color: #4a78ac;
    font-size: 8px;
    line-height: 8px;
  }
  .grow {
    width: 22px;
    font-size: 14px;
  }
  .on {
    background: #c8cbc7;
  }
  .mini {
    width: 12px;
    height: 21px;
  }
  .rule {
    width: 1px;
    height: 22px;
    margin: 0 4px;
    background: #d8dbd7;
  }
  .align .rule {
    margin: 0 5px;
  }
  .align .glyph + .rule {
    margin-left: 7px;
  }
  .menu-anchor {
    position: relative;
  }
  .borders-btn {
    gap: 5px;
    width: 32px;
    height: 21px;
    background: #c8cbc7;
  }
  .color-btn {
    gap: 7px;
    height: 21px;
    margin-left: 11px;
  }
  .color-btn + .color-btn {
    margin-left: 3px;
  }
  .font-color {
    width: 15px;
    font-size: 13px;
    font-weight: 600;
    line-height: 13px;
    border-bottom: 3px solid #1d2f5e;
  }
  .align .wide {
    display: flex;
    justify-content: flex-start;
    gap: 5px;
    width: 39px;
  }
  .text-btn {
    gap: 2px;
  }
  .align .text-btn + .mini {
    margin-left: 4px;
  }
  .sign {
    width: 20px;
    font-size: 14px;
  }
  .decimals {
    flex-direction: column;
    align-items: flex-end;
    width: 21px;
    font-size: 8px;
    line-height: 10px;
  }
  .decimals span {
    display: flex;
    align-items: center;
    height: 10px;
  }
  .bigs {
    justify-content: center;
    gap: 7px;
  }
  .styles {
    gap: 1px;
  }
  .editing {
    gap: 4px;
    padding-left: 6px;
  }
  .editing .stack {
    width: 80px;
  }
  .collapse {
    align-self: end;
    justify-self: end;
    width: 26px;
    height: 20px;
  }

  /* borders menu */
  .menu,
  .palette {
    position: absolute;
    z-index: 2;
    color: #5f625f;
    background: var(--paper);
    border: 1px solid #c3c7c2;
    box-shadow: 1px 1px 3px #0004;
  }
  .menu {
    top: 100%;
    left: 0;
    width: 209px;
    padding: 1px 0;
  }
  h2 {
    height: 22px;
    margin: 0 1px;
    padding-left: 7px;
    font-size: 11px;
    font-weight: 700;
    line-height: 22px;
    background: #e7eae6;
  }
  hr {
    height: 2px;
    margin: 0 1px 0 30px;
    border: 0;
    border-top: 1px solid #dfe3de;
  }
  .items > button,
  .items > .menu-anchor > button {
    justify-content: flex-start;
    gap: 11px;
    width: 100%;
    height: 22px;
    padding-left: 5px;
  }
  .items > :nth-child(even),
  .items > :nth-child(even) > button {
    height: 23px;
  }
  .items > .menu-anchor > .hot {
    gap: 10px;
    color: #444;
    background: #c6c9c5;
  }
  .no-icon {
    width: 14px;
  }
  .arrow {
    margin: 0 8px 0 auto;
    border: solid transparent;
    border-width: 4px 0 4px 4px;
    border-left-color: #666;
  }
  .palette {
    top: -38px;
    left: 207px;
    width: 163px;
  }
  .auto,
  .more {
    justify-content: flex-start;
    gap: 12px;
    width: 100%;
    height: 23px;
    padding-left: 5px;
  }
  .more {
    height: 26px;
  }
  .chip {
    width: 13px;
    height: 13px;
    background: #000;
  }
  .swatches {
    display: grid;
    grid-template-columns: repeat(10, 11px);
    column-gap: 5px;
    padding: 2px 3px;
  }
  .swatch {
    height: 11px;
  }
  .tints {
    padding: 4px 3px 3px;
  }
  .tints .swatch {
    height: 12px;
  }
  .picked {
    outline: 1px solid #d9601a;
  }
  .halo {
    position: absolute;
    left: -4px;
    bottom: 4px;
    width: 50px;
    height: 50px;
    border-radius: 50%;
    background: radial-gradient(circle, #fff00085 55%, #fff00000 72%);
    pointer-events: none;
  }
  .pointer {
    position: absolute;
    left: 21px;
    bottom: 14px;
    pointer-events: none;
  }

  /* formula bar */
  .formula-bar {
    flex: none;
    display: flex;
    align-items: center;
    height: 41px;
    padding: 0 4px;
  }
  .name-box,
  .formula-buttons,
  .formula {
    display: flex;
    align-items: center;
    height: 24px;
    background: var(--paper);
    border: 1px solid #cdd1cc;
  }
  .name-box {
    width: 95px;
    padding: 0 4px 0 5px;
  }
  .name-box input,
  .formula input {
    flex: 1;
  }
  .grip {
    width: 28px;
    color: #999;
    font-size: 12px;
    text-align: center;
  }
  .formula-buttons {
    width: 103px;
  }
  .formula-buttons button {
    flex: 1;
  }
  .fx {
    font-family: 'Liberation Serif', serif;
    font-size: 14px;
    font-style: italic;
  }
  .formula {
    flex: 1;
    margin-left: 3px;
  }
  .formula button {
    width: 14px;
  }

  /* worksheet */
  .sheet {
    flex: 1;
    display: flex;
    min-height: 0;
  }
  .grid {
    flex: 1;
    min-width: 0;
    overflow: hidden;
    border-right: 1px solid #b4b8b3;
  }
  table {
    table-layout: fixed;
    width: 1283px;
    border-collapse: separate;
    border-spacing: 0;
    background: var(--paper);
  }
  col {
    width: 60px;
  }
  .head-col {
    width: 23px;
  }
  th,
  td {
    height: 19px;
    padding: 0 2px;
    overflow: hidden;
    border: solid var(--line);
    border-width: 0 1px 1px 0;
    line-height: 17px;
    white-space: nowrap;
    vertical-align: bottom;
  }
  th {
    padding: 0;
    color: #333;
    font-size: 12px;
    font-weight: 400;
    text-align: center;
    background: #e5e8e4;
  }
  thead th {
    border-bottom-color: #a4a8a3;
  }
  tbody th {
    border-right-color: #a4a8a3;
  }
  thead .current {
    color: var(--green);
    background: #d0d3cf;
    border-bottom: 2px solid var(--green);
    line-height: 16px;
  }
  tbody .current {
    color: var(--green);
    background: #d0d3cf;
    border-right: 2px solid var(--green);
  }
  .corner {
    background: linear-gradient(135deg, #e5e8e4 60%, #b8bcb7 60%);
  }
  td {
    color: #111;
    font-family: Lato, sans-serif;
    font-size: 13px;
  }
  .short th,
  .short td {
    height: 18px;
    line-height: 16px;
  }
  .tall th,
  .tall td {
    height: 27px;
    line-height: 20px;
  }
  .num {
    text-align: right;
  }
  .bold {
    font-weight: 700;
  }
  .fancy {
    font-weight: 700;
    font-style: italic;
    text-decoration: underline;
  }
  .edge-b {
    border-bottom-color: #111;
  }
  .edge-r {
    border-right-color: #111;
  }
  .selected {
    position: relative;
    overflow: visible;
  }
  .selected::before {
    content: '';
    position: absolute;
    inset: -2px;
    border: 2px solid var(--green);
  }
  .selected::after {
    content: '';
    position: absolute;
    right: -4px;
    bottom: -4px;
    width: 6px;
    height: 6px;
    background: var(--green);
    border: solid var(--paper);
    border-width: 1px 0 0 1px;
  }
  .v-scroll {
    display: flex;
    flex-direction: column;
    width: 19px;
    padding: 3px 2px 0 3px;
    background: var(--band);
  }
  .v-scroll button,
  .h-scroll button {
    flex: none;
    width: 14px;
    height: 14px;
    background: var(--paper);
    border: 1px solid #a9ada8;
  }
  .v-thumb {
    flex: 1;
    margin-bottom: 20px;
    background: var(--paper);
    border: 1px solid #a9ada8;
  }
  .tri {
    border: 4px solid transparent;
  }
  .tri.up {
    border-top: 0;
    border-bottom-color: #777;
  }
  .tri.down {
    border-bottom: 0;
    border-top-color: #777;
  }
  .tri.left {
    border-left: 0;
    border-right-color: #666;
  }
  .tri.right {
    border-right: 0;
    border-left-color: #666;
  }

  /* sheet tabs and status bar */
  .sheet-tabs {
    flex: none;
    display: flex;
    align-items: flex-start;
    height: 26px;
    border-top: 1px solid #a4a8a3;
  }
  .nav-arrow {
    width: 26px;
    height: 24px;
    opacity: 0.25;
  }
  .nav-arrow:first-child {
    margin-left: 14px;
  }
  .sheet-tab {
    width: 61px;
    height: 23px;
    margin: 0 30px 0 27px;
    color: var(--green);
    font-size: 12px;
    font-weight: 700;
    background: var(--paper);
    border-bottom: 2px solid var(--green);
  }
  .add {
    height: 24px;
  }
  .h-scroll {
    display: flex;
    align-items: center;
    width: 519px;
    height: 25px;
    margin-left: auto;
    padding-right: 18px;
  }
  .h-scroll .grip {
    width: 24px;
    padding-right: 8px;
  }
  .h-thumb {
    flex: 1;
    height: 14px;
    margin-right: 23px;
    background: var(--paper);
    border: 1px solid #a9ada8;
  }
  .status {
    flex: none;
    display: flex;
    align-items: center;
    height: 21px;
    padding: 0 6px;
    background: #eff1ee;
    border-top: 1px solid #cfd3ce;
  }
  .macro {
    margin-left: 15px;
  }
  .views {
    display: flex;
    margin-left: auto;
  }
  .views button {
    width: 36px;
    height: 20px;
  }
  .zoom-btn {
    width: 12px;
    margin-left: 1px;
    font-size: 14px;
    font-weight: 700;
  }
  input[type='range'] {
    width: 94px;
    height: 12px;
    background: linear-gradient(#999, #999) center / 100% 1px no-repeat;
  }
  input[type='range']::-webkit-slider-thumb {
    appearance: none;
    width: 4px;
    height: 11px;
    background: #555;
  }
  .percent {
    width: 38px;
    justify-content: flex-end;
  }

  /* taskbar */
  .taskbar {
    flex: none;
    display: flex;
    height: 37px;
    color: #f2f2f0;
    background: #32312a;
  }
  .taskbar > button {
    width: 46px;
    border: solid transparent;
    border-width: 2px 0;
  }
  .taskbar > .start {
    width: 44px;
  }
  .search {
    display: flex;
    align-items: center;
    width: 270px;
    padding-left: 11px;
    color: #333;
    font-size: 13px;
    background: #f1f4ef;
  }
  .search input {
    flex: 1;
    padding-left: 11px;
  }
  .search input::placeholder {
    color: #444;
    opacity: 1;
  }
  .taskbar > .running {
    border-bottom-color: #7db4dc;
  }
  .front {
    background: #55544d;
  }
  .tray {
    display: flex;
    margin-left: auto;
    padding-right: 2px;
  }
  .tray button {
    width: 22px;
  }
  .tray .weather {
    gap: 10px;
    width: auto;
    margin-right: 18px;
    font-size: 12px;
  }
  .tray .clock {
    flex-direction: column;
    width: 60px;
    line-height: 17px;
  }
  .tray .notes {
    width: 48px;
    padding-right: 4px;
    border-right: 1px solid #77766f;
  }
</style>
